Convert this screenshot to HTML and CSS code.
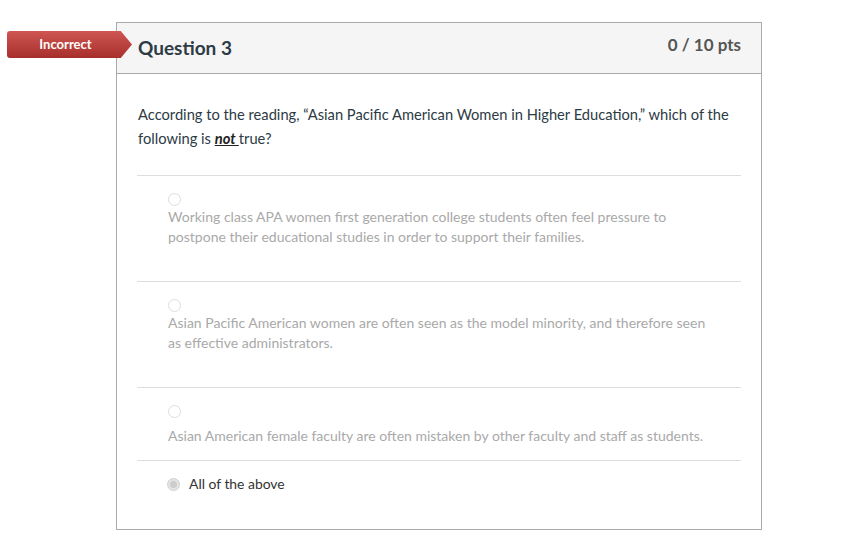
FILE: index.html
```html
<!DOCTYPE html>
<html lang="en">
<head>
    <meta charset="UTF-8">
    <title>Question 3</title>
    <link rel="stylesheet" href="styles.css">
</head>
<body>
    <div class="question">
        <div class="badge">Incorrect</div>
        <div class="question-header">
            <h2>Question 3</h2>
            <span class="points">0 / 10 pts</span>
        </div>
        <div class="question-body">
            <p class="question-text">According to the reading, &ldquo;Asian Pacific American Women in Higher Education,&rdquo; which of the following is <u class="emph">not </u>true?</p>
            <div class="answers">
                <div class="answer">
                    <span class="radio"></span>
                    <div class="answer-text">Working class APA women first generation college students often feel pressure to postpone their educational studies in order to support their families.</div>
                </div>
                <div class="answer">
                    <span class="radio"></span>
                    <div class="answer-text">Asian Pacific American women are often seen as the model minority, and therefore seen as effective administrators.</div>
                </div>
                <div class="answer answer-short">
                    <span class="radio"></span>
                    <div class="answer-text">Asian American female faculty are often mistaken by other faculty and staff as students.</div>
                </div>
                <div class="answer answer-selected">
                    <span class="radio checked"></span>
                    <span class="answer-label">All of the above</span>
                </div>
            </div>
        </div>
    </div>
</body>
</html>
```

FILE: styles.css
```css
body {
    margin: 0;
    padding: 22px 0 0 116px;
    font-family: Lato, "Open Sans", sans-serif;
    background-color: #fff;
    color: #2d3b45;
}

.question {
    position: relative;
    width: 644px;
    border: 1px solid #aaa;
}

.badge {
    position: absolute;
    left: -110px;
    top: 8px;
    box-sizing: border-box;
    width: 125px;
    height: 27px;
    line-height: 26px;
    padding-right: 8px;
    text-align: center;
    font-size: 13px;
    font-weight: 700;
    color: #fff;
    background: linear-gradient(#cf5652, #a72f2b);
    border-radius: 3px 0 0 3px;
    clip-path: polygon(0 0, 91% 0, 100% 50%, 91% 100%, 0 100%);
}

.question-header {
    display: flex;
    justify-content: space-between;
    align-items: center;
    height: 50px;
    padding: 0 20px 0 21px;
    background-color: #f5f5f5;
    border-bottom: 1px solid #aaa;
}

.question-header h2 {
    margin: -2px 0 0 0;
    font-size: 19px;
    font-weight: 700;
    color: #2d3b45;
}

.points {
    font-size: 17px;
    font-weight: 700;
    color: #555;
    margin-top: -8px;
}

.question-body {
    padding: 28px 20px 0 20px;
}

.question-text {
    margin: 0 0 25px 1px;
    font-size: 14.7px;
    line-height: 24px;
}

.emph {
    font-weight: 700;
    font-style: italic;
    color: #222;
}

.answer {
    border-top: 1px solid #ddd;
    padding: 17px 28px 34px 31px;
}

.answer-short {
    padding-bottom: 14px;
}

.answer-short .answer-text {
    margin-top: 8px;
}

.answer-selected {
    display: flex;
    align-items: center;
    padding: 13px 30px 35px 30px;
}

.radio {
    display: block;
    width: 11px;
    height: 11px;
    border: 1px solid #ddd;
    border-radius: 50%;
    background-color: #fff;
}

.radio.checked {
    background: radial-gradient(circle, #ccc 0, #ccc 3px, #e4e4e4 4px);
    border-color: #d0d0d0;
    margin-right: 9px;
}

.answer-text {
    margin-top: 1px;
    font-size: 14px;
    line-height: 20px;
    color: #a9a9a9;
}

.answer-label {
    font-size: 13.9px;
    line-height: 20px;
    color: #333;
}
```
